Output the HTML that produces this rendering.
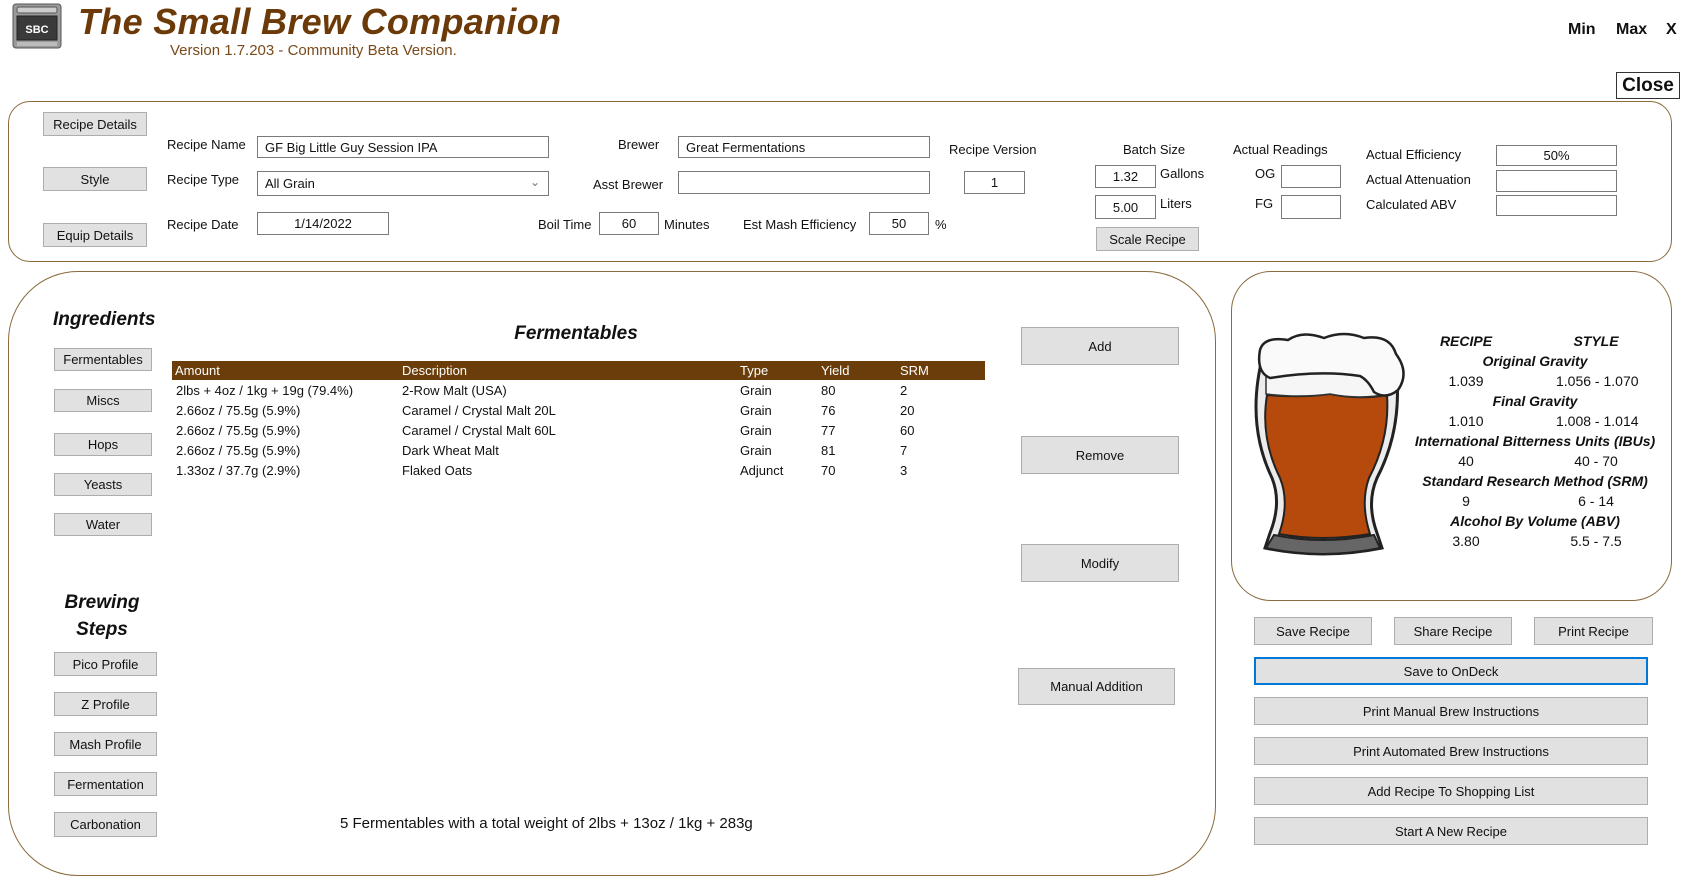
<!DOCTYPE html>
<html><head><meta charset="utf-8"><style>
*{box-sizing:border-box;margin:0;padding:0}
body{width:1685px;height:886px;background:#fff;position:relative;overflow:hidden;font-family:"Liberation Sans",sans-serif;font-size:13px;color:#111}
.a{position:absolute;white-space:nowrap}
.btn{position:absolute;background:#e1e1e1;border:1px solid #adadad;display:flex;align-items:center;justify-content:center;font-size:13px;color:#111}
.in{position:absolute;border:1px solid #7a7a7a;background:#fff;font-size:13px;display:flex;align-items:center;padding-left:7px}
.c{justify-content:center;padding-left:0}
.panel{position:absolute;border:1.5px solid #8b6a3e}
.bi{font-weight:bold;font-style:italic}
.tr{position:absolute;left:176px;font-size:13px}
.tr span{position:absolute;white-space:nowrap}
</style></head><body>
<svg class="a" style="left:12px;top:3px" width="50" height="46" viewBox="0 0 50 46"><rect x="1" y="1" width="48" height="44" rx="3" fill="#9a9a9a" stroke="#555"/><rect x="5" y="4" width="40" height="6" rx="2" fill="#ccc" stroke="#555"/><rect x="5" y="13" width="40" height="24" fill="#3a3a3a" stroke="#222"/><text x="25" y="30" font-size="11" font-weight="bold" fill="#fff" text-anchor="middle" font-family="Liberation Sans">SBC</text><rect x="5" y="39" width="40" height="4" fill="#bbb"/></svg>
<div class="a bi" style="left:78px;top:1px;font-size:36px;color:#6b3a08;letter-spacing:0.3px">The Small Brew Companion</div>
<div class="a" style="left:170px;top:42px;font-size:15px;color:#7a4a1a">Version 1.7.203 - Community Beta Version.</div>
<div class="a" style="left:1568px;top:21px;font-size:16px;font-weight:bold">Min</div>
<div class="a" style="left:1616px;top:21px;font-size:16px;font-weight:bold">Max</div>
<div class="a" style="left:1666px;top:21px;font-size:16px;font-weight:bold">X</div>
<div class="a" style="left:1616px;top:72px;width:64px;height:27px;border:1px solid #333;font-size:19px;font-weight:bold;display:flex;align-items:center;justify-content:center">Close</div>

<div class="panel" style="left:8px;top:101px;width:1664px;height:161px;border-radius:22px"></div>
<div class="btn" style="left:43px;top:112px;width:104px;height:24px">Recipe Details</div>
<div class="btn" style="left:43px;top:167px;width:104px;height:24px">Style</div>
<div class="btn" style="left:43px;top:223px;width:104px;height:24px">Equip Details</div>
<div class="a" style="left:167px;top:137px">Recipe Name</div>
<div class="in" style="left:257px;top:136px;width:292px;height:22px">GF Big Little Guy Session IPA</div>
<div class="a" style="left:167px;top:172px">Recipe Type</div>
<div class="in" style="left:257px;top:171px;width:292px;height:25px">All Grain<span style="position:absolute;right:8px;top:3px;color:#777;font-size:12px">&#8964;</span></div>
<div class="a" style="left:167px;top:217px">Recipe Date</div>
<div class="in c" style="left:257px;top:212px;width:132px;height:23px">1/14/2022</div>
<div class="a" style="left:618px;top:137px">Brewer</div>
<div class="in" style="left:678px;top:136px;width:252px;height:22px">Great Fermentations</div>
<div class="a" style="left:593px;top:177px">Asst Brewer</div>
<div class="in" style="left:678px;top:171px;width:252px;height:23px"></div>
<div class="a" style="left:538px;top:217px">Boil Time</div>
<div class="in c" style="left:599px;top:212px;width:60px;height:23px">60</div>
<div class="a" style="left:664px;top:217px">Minutes</div>
<div class="a" style="left:743px;top:217px">Est Mash Efficiency</div>
<div class="in c" style="left:869px;top:212px;width:60px;height:23px">50</div>
<div class="a" style="left:935px;top:217px">%</div>
<div class="a" style="left:949px;top:142px">Recipe Version</div>
<div class="in c" style="left:964px;top:171px;width:61px;height:23px">1</div>
<div class="a" style="left:1123px;top:142px">Batch Size</div>
<div class="in c" style="left:1095px;top:165px;width:61px;height:23px">1.32</div>
<div class="a" style="left:1160px;top:166px">Gallons</div>
<div class="in c" style="left:1095px;top:195px;width:61px;height:24px">5.00</div>
<div class="a" style="left:1160px;top:196px">Liters</div>
<div class="btn" style="left:1096px;top:227px;width:103px;height:24px">Scale Recipe</div>
<div class="a" style="left:1233px;top:142px">Actual Readings</div>
<div class="a" style="left:1255px;top:166px">OG</div>
<div class="in" style="left:1281px;top:165px;width:60px;height:23px"></div>
<div class="a" style="left:1255px;top:196px">FG</div>
<div class="in" style="left:1281px;top:195px;width:60px;height:24px"></div>
<div class="a" style="left:1366px;top:147px">Actual Efficiency</div>
<div class="in c" style="left:1496px;top:145px;width:121px;height:21px">50%</div>
<div class="a" style="left:1366px;top:172px">Actual Attenuation</div>
<div class="in" style="left:1496px;top:170px;width:121px;height:22px"></div>
<div class="a" style="left:1366px;top:197px">Calculated ABV</div>
<div class="in" style="left:1496px;top:195px;width:121px;height:21px"></div>

<div class="panel" style="left:8px;top:271px;width:1208px;height:605px;border-radius:70px"></div>
<div class="a bi" style="left:53px;top:309px;font-size:19px">Ingredients</div>
<div class="btn" style="left:54px;top:348px;width:98px;height:23px">Fermentables</div>
<div class="btn" style="left:54px;top:389px;width:98px;height:23px">Miscs</div>
<div class="btn" style="left:54px;top:433px;width:98px;height:23px">Hops</div>
<div class="btn" style="left:54px;top:473px;width:98px;height:23px">Yeasts</div>
<div class="btn" style="left:54px;top:513px;width:98px;height:23px">Water</div>
<div class="a bi" style="left:42px;top:589px;width:120px;text-align:center;font-size:19px;line-height:27px">Brewing<br>Steps</div>
<div class="btn" style="left:54px;top:652px;width:103px;height:24px">Pico Profile</div>
<div class="btn" style="left:54px;top:692px;width:103px;height:24px">Z Profile</div>
<div class="btn" style="left:54px;top:732px;width:103px;height:24px">Mash Profile</div>
<div class="btn" style="left:54px;top:772px;width:103px;height:24px">Fermentation</div>
<div class="btn" style="left:54px;top:812px;width:103px;height:25px">Carbonation</div>

<div class="a bi" style="left:476px;top:323px;width:200px;text-align:center;font-size:19px">Fermentables</div>
<div class="a" style="left:172px;top:361px;width:813px;height:19px;background:#6b3d0a;color:#fff;font-size:13px">
<span class="a" style="left:3px;top:2px">Amount</span><span class="a" style="left:230px;top:2px">Description</span><span class="a" style="left:568px;top:2px">Type</span><span class="a" style="left:649px;top:2px">Yield</span><span class="a" style="left:728px;top:2px">SRM</span></div>
<div class="tr" style="top:383px"><span style="left:0">2lbs + 4oz / 1kg + 19g (79.4%)</span><span style="left:226px">2-Row Malt (USA)</span><span style="left:564px">Grain</span><span style="left:645px">80</span><span style="left:724px">2</span></div>
<div class="tr" style="top:403px"><span style="left:0">2.66oz / 75.5g (5.9%)</span><span style="left:226px">Caramel / Crystal Malt 20L</span><span style="left:564px">Grain</span><span style="left:645px">76</span><span style="left:724px">20</span></div>
<div class="tr" style="top:423px"><span style="left:0">2.66oz / 75.5g (5.9%)</span><span style="left:226px">Caramel / Crystal Malt 60L</span><span style="left:564px">Grain</span><span style="left:645px">77</span><span style="left:724px">60</span></div>
<div class="tr" style="top:443px"><span style="left:0">2.66oz / 75.5g (5.9%)</span><span style="left:226px">Dark Wheat Malt</span><span style="left:564px">Grain</span><span style="left:645px">81</span><span style="left:724px">7</span></div>
<div class="tr" style="top:463px"><span style="left:0">1.33oz / 37.7g (2.9%)</span><span style="left:226px">Flaked Oats</span><span style="left:564px">Adjunct</span><span style="left:645px">70</span><span style="left:724px">3</span></div>
<div class="a" style="left:340px;top:815px;font-size:15px">5 Fermentables with a total weight of 2lbs + 13oz / 1kg + 283g</div>
<div class="btn" style="left:1021px;top:327px;width:158px;height:38px">Add</div>
<div class="btn" style="left:1021px;top:436px;width:158px;height:38px">Remove</div>
<div class="btn" style="left:1021px;top:544px;width:158px;height:38px">Modify</div>
<div class="btn" style="left:1018px;top:668px;width:157px;height:37px">Manual Addition</div>

<div class="panel" style="left:1231px;top:271px;width:441px;height:330px;border-radius:40px"></div>
<svg class="a" style="left:1250px;top:328px" width="160" height="232" viewBox="0 0 160 232">
<path d="M10 40 Q-2 100 22 150 Q32 175 20 205 L15 220 Q72 232 132 220 L127 205 Q116 175 127 150 Q153 100 146 40 Z" fill="#ececec" stroke="#222" stroke-width="3"/>
<path d="M17 67 Q10 110 30 150 Q40 175 29 206 Q72 214 120 206 Q110 175 119 150 Q140 110 137 67 Q110 72 80 66 Q50 70 17 67 Z" fill="#b54a0c" stroke="#222" stroke-width="2"/>
<path d="M24 207 Q72 217 124 207 L130 220 Q72 232 16 220 Z" fill="#666" stroke="#222" stroke-width="2"/>
<path d="M16 40 L16 66 Q50 70 80 66 Q110 72 138 66 L140 45 Z" fill="#f6f6f6" stroke="#333" stroke-width="1.5"/>
<path d="M10 22 Q14 8 38 12 Q52 2 74 10 Q94 2 114 10 Q140 6 146 26 Q160 45 148 62 Q136 72 124 64 Q118 52 110 48 Q70 42 20 50 Q6 44 10 22 Z" fill="#fafafa" stroke="#222" stroke-width="2.5"/>
</svg>
<div class="a bi" style="left:1426px;top:333px;width:80px;text-align:center;font-size:14px">RECIPE</div>
<div class="a bi" style="left:1556px;top:333px;width:80px;text-align:center;font-size:14px">STYLE</div>
<div class="a" style="left:1400px;top:351px;width:270px;text-align:center;font-size:14px;font-style:italic;font-weight:bold;line-height:20px">
<div style="height:20px">Original Gravity</div><div style="height:20px;position:relative"><span class="a" style="left:26px;width:80px;text-align:center;font-weight:normal;font-style:normal">1.039</span><span class="a" style="left:156px;width:80px;text-align:center;font-weight:normal;font-style:normal">1.056 - 1.070</span></div>
<div style="height:20px">Final Gravity</div><div style="height:20px;position:relative"><span class="a" style="left:26px;width:80px;text-align:center;font-weight:normal;font-style:normal">1.010</span><span class="a" style="left:156px;width:80px;text-align:center;font-weight:normal;font-style:normal">1.008 - 1.014</span></div>
<div style="height:20px">International Bitterness Units (IBUs)</div><div style="height:20px;position:relative"><span class="a" style="left:26px;width:80px;text-align:center;font-weight:normal;font-style:normal">40</span><span class="a" style="left:156px;width:80px;text-align:center;font-weight:normal;font-style:normal">40 - 70</span></div>
<div style="height:20px">Standard Research Method (SRM)</div><div style="height:20px;position:relative"><span class="a" style="left:26px;width:80px;text-align:center;font-weight:normal;font-style:normal">9</span><span class="a" style="left:156px;width:80px;text-align:center;font-weight:normal;font-style:normal">6 - 14</span></div>
<div style="height:20px">Alcohol By Volume (ABV)</div><div style="height:20px;position:relative"><span class="a" style="left:26px;width:80px;text-align:center;font-weight:normal;font-style:normal">3.80</span><span class="a" style="left:156px;width:80px;text-align:center;font-weight:normal;font-style:normal">5.5 - 7.5</span></div>
</div>

<div class="btn" style="left:1254px;top:617px;width:118px;height:28px">Save Recipe</div>
<div class="btn" style="left:1394px;top:617px;width:118px;height:28px">Share Recipe</div>
<div class="btn" style="left:1534px;top:617px;width:119px;height:28px">Print Recipe</div>
<div class="btn" style="left:1254px;top:657px;width:394px;height:28px;border:2px solid #0078d7">Save to OnDeck</div>
<div class="btn" style="left:1254px;top:697px;width:394px;height:28px">Print Manual Brew Instructions</div>
<div class="btn" style="left:1254px;top:737px;width:394px;height:28px">Print Automated Brew Instructions</div>
<div class="btn" style="left:1254px;top:777px;width:394px;height:28px">Add Recipe To Shopping List</div>
<div class="btn" style="left:1254px;top:817px;width:394px;height:28px">Start A New Recipe</div>
</body></html>
